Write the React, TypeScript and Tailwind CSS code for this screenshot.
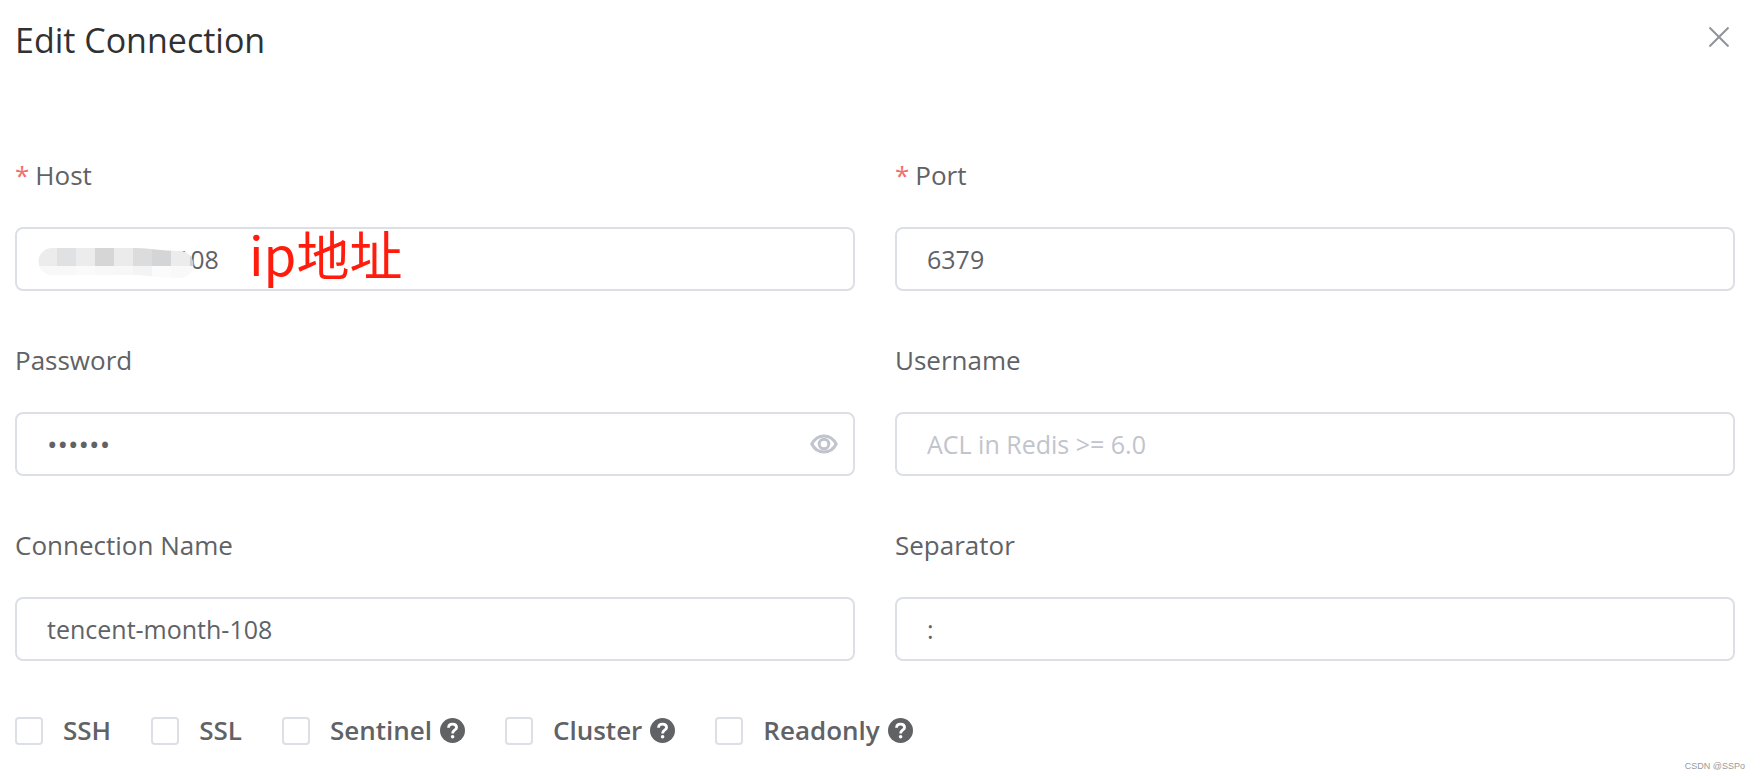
import React, { useState } from 'react';

const inputClass =
  'block h-16 w-full rounded-lg border-2 border-[#dcdfe6] bg-white px-[30px] leading-9 text-[#606266] outline-none placeholder:text-[#c0c4cc]';

type FieldProps = {
  id: string;
  label: string;
  required?: boolean;
  children: React.ReactNode;
};

function Field({ id, label, required, children }: FieldProps) {
  return (
    <div>
      <label htmlFor={id} className="mb-[34px] flex gap-1.5 text-[26px] leading-9">
        {required && <span className="text-[#f56c6c]">*</span>}
        {label}
      </label>
      <div className="relative">{children}</div>
    </div>
  );
}

// Pixelated strip that hides the first part of the address
function Mosaic() {
  const top = ['#ececec', '#dfe1e2', '#ececec', '#d6d6d6', '#ebebeb', '#dcdcdc', '#d4d5d6', '#ececec', '#d0d0d0'];
  const bottom = ['#f8f8f8', '#f8f8f8', '#fafafa', '#f8f8f8', '#f7f7f7', '#f4f4f4', '#fbfbfb', '#f9f9f9', '#f8f8f8'];
  return (
    <svg className="absolute top-5 left-[23px]" width="156" height="32" viewBox="0 0 156 32" aria-hidden="true">
      <clipPath id="strip">
        <path d="M14 1H98C112 1 122 4 142 4A13 13 0 0 1 142 31C118 31 108 28 98 28H14A13 13 0 0 1 14 1Z" />
      </clipPath>
      <g clipPath="url(#strip)">
        {top.map((fill, i) => (
          <rect key={i} x={i * 19} y="0" width="19" height="19" fill={fill} />
        ))}
        {bottom.map((fill, i) => (
          <rect key={i} x={i * 19} y="19" width="19" height="13" fill={fill} />
        ))}
      </g>
    </svg>
  );
}

function QuestionIcon() {
  return (
    <svg className="size-[25px]" viewBox="0 0 24 24" aria-hidden="true">
      <circle cx="12" cy="12" r="12" fill="#606266" />
      <path
        d="M8.2 9.4C8.2 7 9.8 5.8 12.1 5.8S15.9 7 15.9 9C15.9 11.6 12.1 11.4 12.1 14.9"
        fill="none"
        stroke="#fff"
        strokeWidth="2.7"
      />
      <circle cx="12.1" cy="18" r="1.7" fill="#fff" />
    </svg>
  );
}

const options = [
  { name: 'SSH', help: false },
  { name: 'SSL', help: false },
  { name: 'Sentinel', help: true },
  { name: 'Cluster', help: true },
  { name: 'Readonly', help: true },
];

export default function App() {
  const [showPassword, setShowPassword] = useState(false);

  return (
    <div className="bg-white pr-[25px] pl-[15px] font-['Open_Sans','Noto_Sans_CJK_SC',sans-serif] text-[#606266]">
      <header className="flex items-start justify-between pt-4">
        <h1 className="text-[34px] leading-12 text-[#303133]">Edit Connection</h1>
        <button type="button" aria-label="Close" className="px-1.5 py-[11px] text-[#909399]">
          <svg className="size-5" viewBox="0 0 20 20" fill="none" stroke="currentColor" strokeWidth="2">
            <path d="M0.5 0.5L19.5 19.5M19.5 0.5L0.5 19.5" />
          </svg>
        </button>
      </header>

      <form className="pt-[93px]">
        <div className="grid grid-cols-2 gap-x-10 gap-y-[51px]">
          <Field id="host" label="Host" required>
            <input id="host" className={`${inputClass} pl-[159px] text-[25px]`} defaultValue="108" />
            <Mosaic />
            <span className="pointer-events-none absolute top-0 left-[234px] font-['Noto_Sans_CJK_SC',sans-serif] text-[53px] leading-13 text-[#ff1c0c]">
              ip地址
            </span>
          </Field>
          <Field id="port" label="Port" required>
            <input id="port" className={`${inputClass} text-[25px]`} defaultValue="6379" />
          </Field>
          <Field id="password" label="Password">
            <input
              id="password"
              type={showPassword ? 'text' : 'password'}
              className={`${inputClass} text-[28px]`}
              defaultValue="123456"
            />
            <button
              type="button"
              aria-label="Show password"
              onClick={() => setShowPassword(!showPassword)}
              className="absolute inset-y-0 right-[17px] flex items-center text-[#c0c4cc]"
            >
              <svg width="28" height="20" viewBox="0 0 28 20" fill="none" stroke="currentColor" strokeWidth="3">
                <path d="M1.8 10C7.5-0.8 20.5-0.8 26.2 10C20.5 20.8 7.5 20.8 1.8 10Z" />
                <circle cx="14" cy="10" r="4.8" />
              </svg>
            </button>
          </Field>
          <Field id="username" label="Username">
            <input id="username" className={`${inputClass} text-[25px]`} placeholder="ACL in Redis >= 6.0" />
          </Field>
          <Field id="name" label="Connection Name">
            <input id="name" className={`${inputClass} text-[25px]`} defaultValue="tencent-month-108" />
          </Field>
          <Field id="separator" label="Separator">
            <input id="separator" className={`${inputClass} text-[25px]`} defaultValue=":" />
          </Field>
        </div>

        <div className="mt-[51px] flex flex-wrap gap-x-10">
          {options.map(({ name, help }) => (
            <label key={name} className="flex items-center gap-5 text-[26px] leading-9 font-semibold">
              <input
                type="checkbox"
                className="size-7 appearance-none rounded-sm border-2 border-[#dcdfe6] bg-white checked:bg-[#409eff]"
              />
              <span className="flex items-center gap-2 pb-0.5">
                {name}
                {help && <QuestionIcon />}
              </span>
            </label>
          ))}
        </div>
      </form>

      <footer className="-mr-2.5 pt-2 text-right font-['Liberation_Sans',sans-serif] text-[9px] leading-4 text-[#999]">
        CSDN @SSPo
      </footer>
    </div>
  );
}
